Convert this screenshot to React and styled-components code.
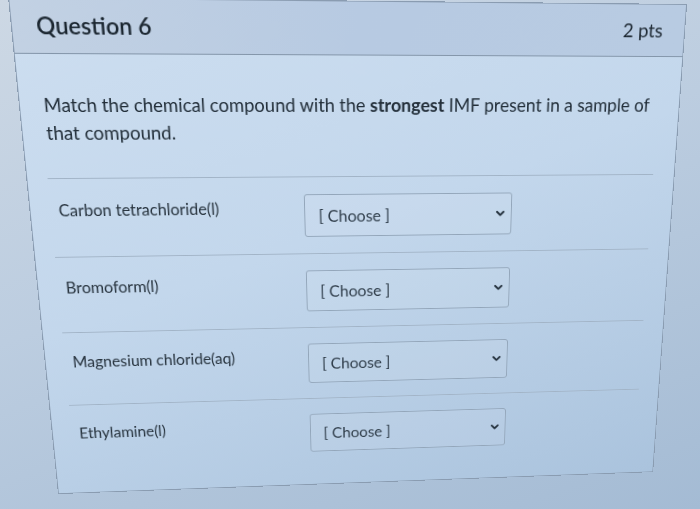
import React from "react";
import styled, { createGlobalStyle } from "styled-components";

// Projective matrix that maps a w×h box onto the four given corners
// (top-left, top-right, bottom-right, bottom-left), for a tilted card.
function quadToMatrix(w, h, corners) {
  const [[x0, y0], [x1, y1], [x2, y2], [x3, y3]] = corners;
  const dx1 = x1 - x2, dy1 = y1 - y2;
  const dx2 = x3 - x2, dy2 = y3 - y2;
  const dx3 = x0 - x1 + x2 - x3, dy3 = y0 - y1 + y2 - y3;
  const den = dx1 * dy2 - dx2 * dy1;
  const g = (dx3 * dy2 - dx2 * dy3) / den;
  const k = (dx1 * dy3 - dx3 * dy1) / den;
  const a = x1 - x0 + g * x1;
  const b = x3 - x0 + k * x3;
  const d = y1 - y0 + g * y1;
  const e = y3 - y0 + k * y3;
  const m = [
    a / w, d / w, 0, g / w,
    b / h, e / h, 0, k / h,
    0, 0, 1, 0,
    x0, y0, 0, 1,
  ];
  return `matrix3d(${m.map((v) => v.toFixed(6)).join(",")})`;
}

const CARD_W = 680;
const CARD_H = 533;
const CARD_TILT = quadToMatrix(CARD_W, CARD_H, [
  [8, -3],
  [687, 4],
  [653, 472],
  [58, 494],
]);

const GlobalStyle = createGlobalStyle`
  html, body {
    margin: 0;
    padding: 0;
    width: 700px;
    height: 509px;
    overflow: hidden;
    font-family: Lato, "Open Sans", "Liberation Sans", sans-serif;
    color: #25313c;
  }
`;

const Page = styled.div`
  width: 700px;
  height: 509px;
  background: linear-gradient(160deg, #cdd8e4 0%, #bccde0 45%, #a4bbd4 100%);
`;

const Card = styled.div`
  width: ${CARD_W}px;
  height: ${CARD_H}px;
  box-sizing: border-box;
  border: 1px solid #8a9cb1;
  background: linear-gradient(160deg, #cddef0 0%, #c3d7ec 45%, #aac3dd 100%);
  transform-origin: 0 0;
  transform: ${CARD_TILT};
`;

const Header = styled.div`
  height: 52px;
  display: flex;
  justify-content: space-between;
  align-items: center;
  padding: 0 23px;
  background: linear-gradient(90deg, #c2d1e3 0%, #b7cae2 50%, #b8cbe2 100%);
  border-bottom: 1px solid #8496aa;
`;

const Title = styled.h2`
  margin: 0;
  font-size: 22.5px;
  line-height: 28px;
  font-weight: 600;
  color: #1b2630;
`;

const Points = styled.span`
  font-size: 19.5px;
  line-height: 24px;
  color: #1b2630;
`;

const Body = styled.div`
  padding: 36px 23px 23px 20px;
`;

const Prompt = styled.p`
  margin: 0 0 32px;
  padding-left: 3px;
  font-size: 18.5px;
  line-height: 28px;
  color: #222e39;

  strong {
    font-weight: 700;
  }
`;

const Row = styled.div`
  height: 83px;
  box-sizing: border-box;
  border-top: 1px solid #a2b4c7;
  padding-left: 8px;
  display: grid;
  grid-template-columns: 251px 222px;
  align-items: start;
`;

const Label = styled.span`
  padding-top: 23px;
  font-size: 16.5px;
  line-height: 20px;
  color: #27333e;
`;

const Select = styled.div`
  margin-top: 18px;
  height: 46px;
  box-sizing: border-box;
  display: flex;
  align-items: center;
  justify-content: space-between;
  padding: 0 6px 0 14px;
  border: 1px solid #93a6ba;
  border-radius: 3px;
  background: rgba(255, 255, 255, 0.07);
  font-size: 17px;
  color: #303e4b;
`;

const Chevron = () => (
  <svg width="11" height="8" viewBox="0 0 11 8" aria-hidden="true">
    <path
      d="M2 2 L5.5 5.5 L9 2"
      fill="none"
      stroke="#25323e"
      strokeWidth="2.2"
      strokeLinecap="round"
      strokeLinejoin="round"
    />
  </svg>
);

const compounds = [
  "Carbon tetrachloride(l)",
  "Bromoform(l)",
  "Magnesium chloride(aq)",
  "Ethylamine(l)",
];

export default function App() {
  return (
    <Page>
      <GlobalStyle />
      <Card>
        <Header>
          <Title>Question 6</Title>
          <Points>2 pts</Points>
        </Header>
        <Body>
          <Prompt>
            Match the chemical compound with the <strong>strongest</strong> IMF
            present in a sample of that compound.
          </Prompt>
          {compounds.map((name) => (
            <Row key={name}>
              <Label>{name}</Label>
              <Select>
                <span>[ Choose ]</span>
                <Chevron />
              </Select>
            </Row>
          ))}
        </Body>
      </Card>
    </Page>
  );
}
